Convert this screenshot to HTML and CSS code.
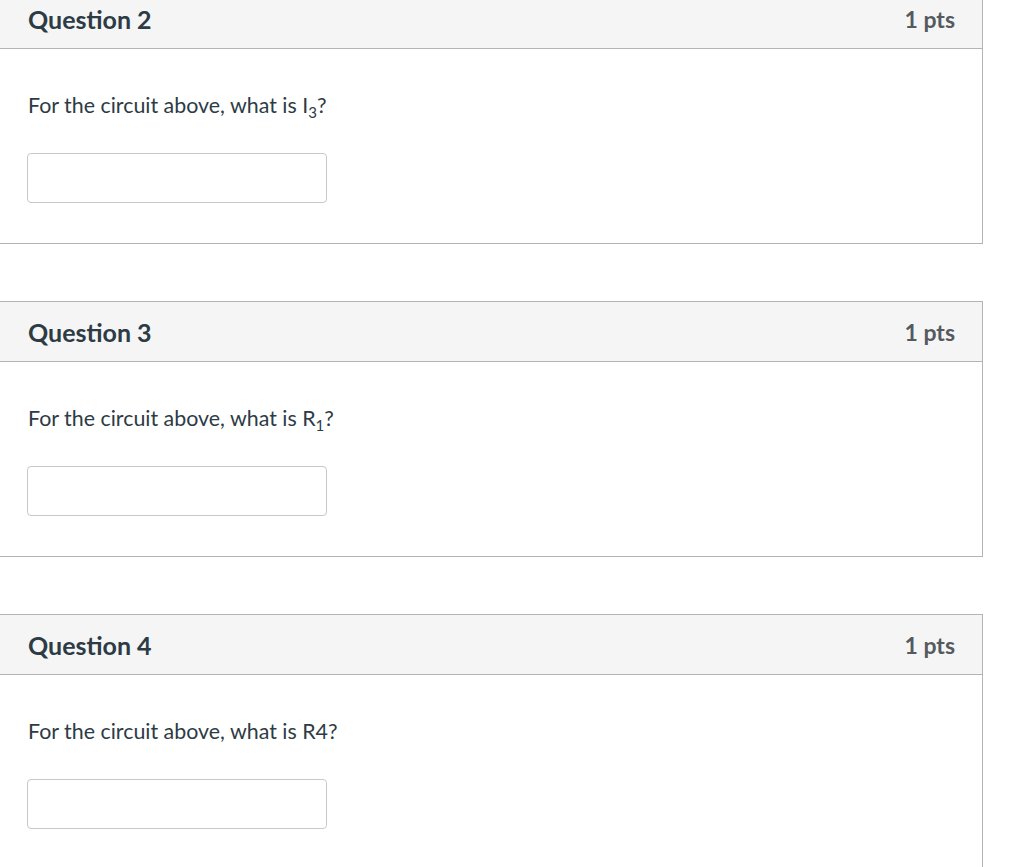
FILE: index.html
```html
<!DOCTYPE html>
<html>
<head>
<meta charset="utf-8">
<link rel="stylesheet" href="styles.css">
</head>
<body>
<div class="quiz">
  <div class="card">
    <div class="header"><span class="name">Question 2</span><span class="pts">1 pts</span></div>
    <div class="body">
      <div class="text">For the circuit above, what is I<sub>3</sub>?</div>
      <input class="answer" type="text">
    </div>
  </div>
  <div class="card">
    <div class="header"><span class="name">Question 3</span><span class="pts">1 pts</span></div>
    <div class="body">
      <div class="text">For the circuit above, what is R<sub>1</sub>?</div>
      <input class="answer" type="text">
    </div>
  </div>
  <div class="card">
    <div class="header"><span class="name">Question 4</span><span class="pts">1 pts</span></div>
    <div class="body">
      <div class="text">For the circuit above, what is R4?</div>
      <input class="answer" type="text">
    </div>
  </div>
</div>
</body>
</html>
```
FILE: styles.css
```css
html, body {
  margin: 0;
  padding: 0;
  background: #ffffff;
}
body {
  font-family: Lato, "Liberation Sans", sans-serif;
  color: #2d3b45;
  overflow: hidden;
}
.quiz {
  display: flex;
  flex-direction: column;
  gap: 57px;
  margin-top: -12px;
  margin-left: -1px;
  width: 984px;
}
.card {
  box-sizing: border-box;
  border: 1px solid #b4b4b4;
  background: #fff;
}
.header {
  box-sizing: border-box;
  background: #f5f5f5;
  border-bottom: 1px solid #b4b4b4;
  height: 60px;
  display: flex;
  align-items: center;
  justify-content: space-between;
  padding: 0 27px 0 28px;
}
.name {
  font-size: 25px;
  font-weight: 700;
  color: #2d3b45;
}
.pts {
  font-size: 23px;
  font-weight: 700;
  color: #555a5e;
}
.body {
  padding: 44px 28px 40px;
  display: flex;
  flex-direction: column;
  align-items: flex-start;
  gap: 36px;
}
.text {
  font-size: 21.4px;
  line-height: 24px;
  color: #2d3b45;
}
.text sub {
  font-size: 15px;
  line-height: 0;
  vertical-align: -5px;
}
.answer {
  box-sizing: border-box;
  width: 300px;
  height: 50px;
  margin: 0 0 0 -1px;
  border: 1px solid #c8c8c8;
  border-radius: 4px;
  background: #fff;
  padding: 0 10px;
  font-family: inherit;
  font-size: 16px;
  outline: none;
}
```
